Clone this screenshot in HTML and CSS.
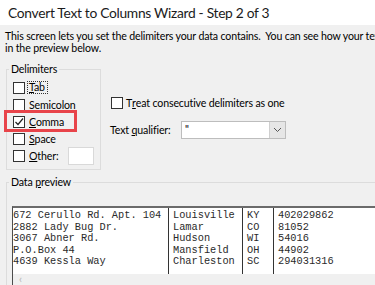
FILE: index.html
```html
<!DOCTYPE html>
<html lang="en">
<head>
  <meta charset="UTF-8">
  <meta name="viewport" content="width=device-width, initial-scale=1.0">
  <title>Convert Text to Columns Wizard</title>
  <link rel="stylesheet" href="styles.css">
</head>
<body>
  <div class="titlebar">Convert Text to Columns Wizard - Step 2 of 3</div>

  <div class="panel">
    <p class="intro">This screen lets you set the delimiters your data contains.&nbsp; You can see how your text is affected<br>in the preview below.</p>

    <div class="middle">
      <fieldset class="group delims">
        <legend>Delimiters</legend>
        <label class="check"><span class="box"></span><span class="focus"><u>T</u>ab</span></label>
        <label class="check"><span class="box"></span>Se<u>m</u>icolon</label>
        <label class="check marked"><span class="box checked">
          <svg width="10" height="10" viewBox="0 0 10 10"><polyline points="1.5,5 4,7.5 9,1.5" fill="none" stroke="#222" stroke-width="1.2"/></svg>
        </span><u>C</u>omma<span class="highlight"></span></label>
        <label class="check"><span class="box"></span><u>S</u>pace</label>
        <label class="check"><span class="box"></span><u>O</u>ther:<span class="other-input"></span></label>
      </fieldset>

      <div class="options">
        <label class="check"><span class="box"></span>T<u>r</u>eat consecutive delimiters as one</label>
        <div class="qualifier">
          <span class="qlabel">Text <u>q</u>ualifier:</span>
          <div class="combo">
            <span class="value">"</span>
            <span class="arrow">
              <svg width="9" height="6" viewBox="0 0 9 6"><polyline points="1,1 4.5,4.5 8,1" fill="none" stroke="#555" stroke-width="1"/></svg>
            </span>
          </div>
        </div>
      </div>
    </div>

    <fieldset class="group preview">
      <legend>Data <u>p</u>review</legend>
      <div class="grid">
        <div class="cols">
          <div class="col c1">672 Cerullo Rd. Apt. 104<br>2882 Lady Bug Dr.<br>3067 Abner Rd.<br>P.O.Box 44<br>4639 Kessla Way</div>
          <div class="col c2">Louisville<br>Lamar<br>Hudson<br>Mansfield<br>Charleston</div>
          <div class="col c3">KY<br>CO<br>WI<br>OH<br>SC</div>
          <div class="col c4">402029862<br>81052<br>54016<br>44902<br>294031316</div>
        </div>
        <div class="hscroll"><span class="left-arrow">&lsaquo;</span></div>
      </div>
    </fieldset>
  </div>
</body>
</html>
```

FILE: styles.css
```css
* { box-sizing: border-box; }
html, body { margin: 0; padding: 0; }
body { width: 375px; height: 285px; overflow: hidden; background: #f0f0f0; color: #000; font-family: Lato, "Noto Sans", sans-serif; font-size: 10.6px; letter-spacing: -0.15px; }
u { text-decoration: underline; text-underline-offset: 1px; }

.titlebar { height: 25px; background: #fff; padding: 3px 0 0 8px; font-size: 13.8px; letter-spacing: -0.3px; line-height: 19px; color: #1b1b1b; white-space: nowrap; }

.panel { padding: 5px 0 0 5px; }
.intro { margin: 0; line-height: 12px; white-space: nowrap; }

.middle { display: flex; margin-top: 9px; }

.group { margin: 0 0 0 1px; border: 1px solid #dcdcdc; }
.group legend { padding: 0 2px; line-height: 13px; }

.delims { width: 95px; padding: 3px 6px 5px 6px; }
.delims legend { margin-left: -4px; }

.check { position: relative; display: flex; align-items: center; height: 17px; white-space: nowrap; }
.box { display: flex; align-items: center; justify-content: center; width: 12px; height: 12px; margin-right: 4px; border: 1px solid #333; background: #fff; flex-shrink: 0; }
.focus { margin-left: -2px; padding: 0 2px 0 1px; border: 1px dotted #333; line-height: 11px; }
.other-input { width: 26px; height: 18px; margin-left: auto; background: #fff; border: 1px solid #d9d9d9; }

.highlight { position: absolute; left: -9px; top: -3px; width: 73px; height: 22px; border: 3px solid #e8444a; }

.options { padding-top: 31px; margin-left: 10px; }
.options .box { margin-right: 3px; }
.qualifier { display: flex; align-items: center; margin-top: 10px; margin-left: -1px; }
.qlabel { width: 71px; }
.combo { display: flex; width: 105px; height: 18px; background: #fff; border: 1px solid #bdbdbd; }
.combo .value { flex: 1; padding-left: 3px; line-height: 14px; }
.combo .arrow { display: flex; align-items: center; justify-content: center; width: 16px; background: #e6e6e6; border-left: 1px solid #cfcfcf; }

.preview { width: 420px; margin-top: 6px; padding: 17px 0 0 5px; }
.preview legend { margin-left: -3px; }

.grid { border-top: 2px solid #6b6b6b; border-left: 1px solid #4d4d4d; }
.cols { display: flex; background: #fff; font-family: "Liberation Mono", "Courier New", monospace; font-size: 10.3px; letter-spacing: 0; line-height: 11.5px; color: #2a2a2a; white-space: nowrap; }
.col { padding: 2px 0 6px 4px; border-right: 1px solid #333; }
.c1 { width: 156px; padding-left: 0; }
.c2 { width: 74px; }
.c3 { width: 31px; }
.c4 { flex: 1; border-right: 0; padding-left: 4px; }
.hscroll { height: 12px; background: #f0f0f0; }
.left-arrow { display: inline-block; margin-left: 6px; color: #b5b5b5; font-size: 11px; line-height: 9px; vertical-align: top; }
```
